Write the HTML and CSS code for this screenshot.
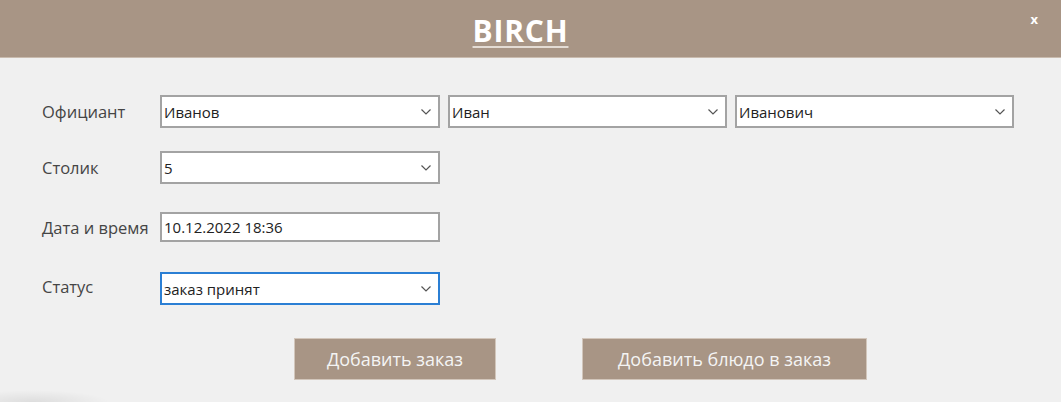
FILE: index.html
```html
<!DOCTYPE html>
<html lang="ru">
<head>
  <meta charset="UTF-8" />
  <meta name="viewport" content="width=device-width, initial-scale=1.0" />
  <title>BIRCH - Заказ</title>
  <link rel="stylesheet" href="styles.css">
</head>
<body>

  <header class="topbar">
    <h1 class="logo">BIRCH</h1>
    <span class="close-btn">x</span>
  </header>

  <main class="order-form">
    <!-- Официант -->
    <div class="row row-waiter">
      <label class="field-label">Официант</label>
      <div class="combo wide">
        <span>Иванов</span>
        <svg class="chevron" width="10" height="6" viewBox="0 0 10 6"><path d="M0.5 0.5 L5 5 L9.5 0.5" fill="none" stroke="#555" stroke-width="1.2"/></svg>
      </div>
      <div class="combo">
        <span>Иван</span>
        <svg class="chevron" width="10" height="6" viewBox="0 0 10 6"><path d="M0.5 0.5 L5 5 L9.5 0.5" fill="none" stroke="#555" stroke-width="1.2"/></svg>
      </div>
      <div class="combo">
        <span>Иванович</span>
        <svg class="chevron" width="10" height="6" viewBox="0 0 10 6"><path d="M0.5 0.5 L5 5 L9.5 0.5" fill="none" stroke="#555" stroke-width="1.2"/></svg>
      </div>
    </div>

    <!-- Столик -->
    <div class="row row-table">
      <label class="field-label">Столик</label>
      <div class="combo wide">
        <span>5</span>
        <svg class="chevron" width="10" height="6" viewBox="0 0 10 6"><path d="M0.5 0.5 L5 5 L9.5 0.5" fill="none" stroke="#555" stroke-width="1.2"/></svg>
      </div>
    </div>

    <!-- Дата и время -->
    <div class="row row-date">
      <label class="field-label">Дата и время</label>
      <div class="textbox">10.12.2022 18:36</div>
    </div>

    <!-- Статус -->
    <div class="row row-status">
      <label class="field-label status-label">Статус</label>
      <div class="combo wide focused">
        <span>заказ принят</span>
        <svg class="chevron" width="10" height="6" viewBox="0 0 10 6"><path d="M0.5 0.5 L5 5 L9.5 0.5" fill="none" stroke="#555" stroke-width="1.2"/></svg>
      </div>
    </div>

    <div class="buttons">
      <button class="btn btn-order">Добавить заказ</button>
      <button class="btn btn-dish">Добавить блюдо в заказ</button>
    </div>
  </main>

</body>
</html>
```

FILE: styles.css
```css
html {
  overflow: hidden;
}
body {
  margin: 0;
  background: #f0f0f0;
  font-family: 'Open Sans', 'Noto Sans', sans-serif;
  color: #333;
  height: 402px;
  overflow: hidden;
  position: relative;
}
body::after {
  content: '';
  position: absolute;
  left: 0;
  bottom: 0;
  width: 110px;
  height: 12px;
  background: radial-gradient(ellipse at 30% 100%, rgba(0, 0, 0, 0.08), rgba(0, 0, 0, 0) 70%);
}

.topbar {
  height: 57px;
  background: #a89585;
  border-bottom: 1px solid #c9bbae;
  display: flex;
  justify-content: center;
  align-items: center;
  position: relative;
}
.topbar .logo {
  margin: 0 0 0 -20px;
  font-size: 30px;
  font-weight: bold;
  letter-spacing: 0.8px;
  color: #ffffff;
  text-decoration: underline;
  text-decoration-color: #e4dcd4;
  text-decoration-thickness: 2px;
  text-underline-offset: 4px;
  line-height: 1;
  padding-top: 5px;
}
.close-btn {
  position: absolute;
  top: 10px;
  right: 23px;
  color: #ffffff;
  font-weight: bold;
  font-size: 13px;
}

.order-form {
  padding: 37px 0 0 42px;
}
.row {
  display: flex;
  align-items: center;
  gap: 8px;
}
.row-table { margin-top: 23px; }
.row-date { margin-top: 28px; }
.row-status { margin-top: 30px; }

.field-label {
  width: 110px;
  font-size: 16.5px;
  color: #454545;
  white-space: nowrap;
}
.status-label {
  margin-top: -4px;
}

.combo {
  width: 279px;
  height: 33px;
  box-sizing: border-box;
  border: 2px solid #a3a3a3;
  background: #fff;
  display: flex;
  align-items: center;
  justify-content: space-between;
  padding: 0 7px 0 2px;
  font-size: 15px;
  color: #222;
}
.combo.wide {
  width: 280px;
}
.combo.focused {
  border-color: #2b7fd4;
}
.chevron {
  display: block;
}

.textbox {
  width: 280px;
  height: 30px;
  box-sizing: border-box;
  border: 2px solid #a3a3a3;
  background: #fff;
  display: flex;
  align-items: center;
  padding: 0 2px;
  font-size: 15px;
  color: #222;
}

.buttons {
  display: flex;
  gap: 86px;
  margin-top: 33px;
  padding-left: 252px;
}
.btn {
  height: 42px;
  border: 1px solid #d2c6bb;
  background: #a89585;
  color: #f4f4f4;
  font-family: 'Open Sans', 'Noto Sans', sans-serif;
  font-size: 18px;
  cursor: pointer;
}
.btn-order { width: 202px; }
.btn-dish { width: 285px; }
```
